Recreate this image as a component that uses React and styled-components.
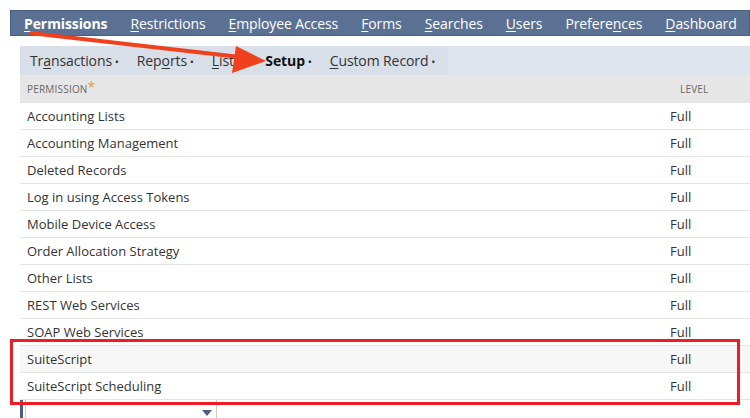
import React from "react";
import styled, { createGlobalStyle } from "styled-components";

const G = createGlobalStyle`
  body { margin: 0; background: #fff; font-family: "Open Sans", sans-serif; }
`;
const Page = styled.div`position: relative; width: 750px; height: 418px; overflow: hidden; padding-top: 10px; box-sizing: border-box;`;
const Nav = styled.div`
  margin-left: 10px; height: 26px; background: #5b7194; border: 1px solid #4a5e80;
  display: flex; align-items: center; gap: 23px; padding-left: 13px; box-sizing: border-box;
  white-space: nowrap;
`;
const NavItem = styled.span`
  color: #fff; font-size: 14px; letter-spacing: -0.1px; font-weight: ${p => (p.$active ? 700 : 400)};
  u { text-decoration-thickness: 1px; text-underline-offset: 2px; }
`;
const SubBar = styled.div`
  margin: 10px 0 0 20px; height: 29px; background: #dfe5ee; display: flex;
`;
const Tabs = styled.div`
  display: flex; align-items: center; gap: 18px; padding: 0 10px; width: 428px; box-sizing: border-box;
  background: #d9dfe9; white-space: nowrap;
`;
const Tab = styled.span`
  position: relative; font-size: 14px; letter-spacing: -0.1px; color: ${p => (p.$active ? "#111" : "#333")};
  font-weight: ${p => (p.$active ? 700 : 400)};
  u { text-underline-offset: 2px; }
  &::after { content: " •"; font-size: 11px; font-weight: 400; }
  ${p => p.$active && `&::before { content: ""; position: absolute; left: 50%; bottom: -11px; margin-left: -10px;
    border: 6px solid transparent; border-bottom-color: #e6e6e6; border-left-width: 10px; border-right-width: 10px; }`}
`;
const Table = styled.div`margin-left: 20px;`;
const Head = styled.div`
  height: 28px; background: #e6e6e6; display: flex; align-items: center;
  font-size: 10px; color: #666; letter-spacing: 0.2px;
`;
const Cell1 = styled.div`flex: 0 0 650px; padding-left: 7px; box-sizing: border-box;`;
const HeadLevel = styled.div`padding-left: 10px;`;
const HeadStar = styled.span`color: #e8a33a; font-size: 14px; vertical-align: top; line-height: 10px;`;
const Row = styled.div`
  height: 27px; display: flex; align-items: center; font-size: 13px; color: #333;
  border-bottom: 1px solid #e4e4e4; box-sizing: border-box; background: ${p => (p.$alt ? "#f7f7f7" : "#fff")};
`;
const Footer = styled.div`
  display: flex; height: 20px; border-left: 3px solid #4c5f82;
`;
const Select = styled.div`
  width: 190px; border: 1px solid #ccc; border-top: none; position: relative; margin-left: 2px;
  &::after { content: ""; position: absolute; right: 4px; top: 10px; border: 5px solid transparent; border-top: 6px solid #4c5f82; }
`;
const RedBox = styled.div`
  position: absolute; left: 10px; top: 339px; width: 730px; height: 66px; border: 3px solid #ee1c25; box-sizing: border-box;
`;
const Arrow = styled.svg`position: absolute; left: 0; top: 0; pointer-events: none;`;

const rows = ["Accounting Lists","Accounting Management","Deleted Records","Log in using Access Tokens","Mobile Device Access","Order Allocation Strategy","Other Lists","REST Web Services","SOAP Web Services","SuiteScript","SuiteScript Scheduling"];

export default function App() {
  return (
    <Page>
      <G />
      <Nav>
        <NavItem $active><u>P</u>ermissions</NavItem>
        <NavItem><u>R</u>estrictions</NavItem>
        <NavItem><u>E</u>mployee Access</NavItem>
        <NavItem><u>F</u>orms</NavItem>
        <NavItem><u>S</u>earches</NavItem>
        <NavItem><u>U</u>sers</NavItem>
        <NavItem>Prefere<u>n</u>ces</NavItem>
        <NavItem><u>D</u>ashboard</NavItem>
      </Nav>
      <SubBar>
        <Tabs>
          <Tab>Tr<u>a</u>nsactions</Tab>
          <Tab>Rep<u>o</u>rts</Tab>
          <Tab><u>L</u>ists</Tab>
          <Tab $active>Setup</Tab>
          <Tab><u>C</u>ustom Record</Tab>
        </Tabs>
      </SubBar>
      <Table>
        <Head><Cell1>PERMISSION<HeadStar>*</HeadStar></Cell1><HeadLevel>LEVEL</HeadLevel></Head>
        {rows.map((r, i) => (
          <Row key={r} $alt={i === 9}><Cell1>{r}</Cell1><div>Full</div></Row>
        ))}
        <Footer><Select /></Footer>
      </Table>
      <RedBox />
      <Arrow width="750" height="418">
        <line x1="30" y1="33" x2="240" y2="57" stroke="#f0401e" strokeWidth="4" />
        <polygon points="266,61 236,46 232,73" fill="#f0401e" />
      </Arrow>
    </Page>
  );
}
